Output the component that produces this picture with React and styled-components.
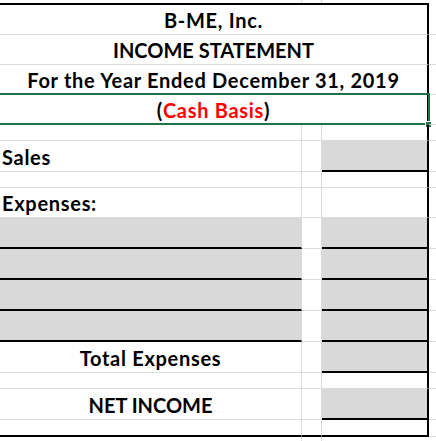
import styled, { createGlobalStyle } from "styled-components";

const GRID = "#dcdcdc";
const FILL = "#d9d9d9";
const INK = "#000";
const SELECT = "#217346";

const GlobalStyle = createGlobalStyle`
  html, body { margin: 0; padding: 0; background: #fff; }
  body { font-family: Lato, "Open Sans", sans-serif; }
`;

const Sheet = styled.div`
  width: 436px;
  height: 441px;
  overflow: hidden;
  background: #fff;
  display: flex;
  flex-direction: column;
`;

const Row = styled.div`
  flex: none;
  display: grid;
  grid-template-columns: 302px 20px 107px 1fr;
  height: ${(p) => p.$h}px;
`;

const Cell = styled.div`
  box-sizing: border-box;
  position: relative;
  grid-column: span ${(p) => p.$span || 1};
  min-width: 0;
  background: ${(p) => (p.$fill ? FILL : "transparent")};
  border-top: ${(p) => (p.$top ? `2px solid ${INK}` : "none")};
  border-right: ${(p) =>
    p.$edge
      ? `2px solid ${INK}`
      : p.$open
      ? "none"
      : `1px solid ${p.$fill ? FILL : GRID}`};
  border-bottom: ${(p) =>
    p.$rule ? `2px solid ${INK}` : p.$flat ? "none" : `1px solid ${GRID}`};
  display: flex;
  align-items: flex-end;
  justify-content: ${(p) => (p.$center ? "center" : "flex-start")};
  padding: 0 2px 4px;
  font-size: 20px;
  font-weight: 700;
  line-height: 20px;
  letter-spacing: ${(p) => (p.$track ? "0.7px" : "0")};
  color: ${INK};
  white-space: nowrap;
`;

const Red = styled.span`
  color: #ff0000;
`;

const Selection = styled.div`
  position: absolute;
  box-sizing: border-box;
  top: -2px;
  bottom: -1px;
  left: -2px;
  right: -3px;
  border: 2px solid ${SELECT};
  pointer-events: none;
`;

const Handle = styled.div`
  position: absolute;
  right: -3px;
  bottom: -4px;
  width: 5px;
  height: 5px;
  background: ${SELECT};
  box-shadow: 0 0 0 1px #fff;
`;

const TitleRow = ({ h, top, track, children, selected }) => (
  <Row $h={h}>
    <Cell $span={3} $edge $top={top} $track={track} $center>
      {children}
      {selected && (
        <Selection>
          <Handle />
        </Selection>
      )}
    </Cell>
    <Cell $open />
  </Row>
);

const LineRow = ({ h = 31, label, center, track, fillA, ruleA, fillC, ruleC, ruleB }) => (
  <Row $h={h}>
    <Cell $fill={fillA} $rule={ruleA} $center={center} $track={track}>
      {label}
    </Cell>
    <Cell $rule={ruleB} />
    <Cell $fill={fillC} $rule={ruleC} $edge />
    <Cell $open />
  </Row>
);

export default function App() {
  return (
    <>
      <GlobalStyle />
      <Sheet>
        <Row $h={3}>
          <Cell $flat />
          <Cell $flat />
          <Cell $flat $open />
          <Cell $flat $open />
        </Row>
        <TitleRow h={32} top track>
          B-ME, Inc.
        </TitleRow>
        <TitleRow h={30}>INCOME STATEMENT</TitleRow>
        <TitleRow h={30} track>
          For the Year Ended December 31, 2019
        </TitleRow>
        <TitleRow h={30} track selected>
          (<Red>Cash Basis</Red>)
        </TitleRow>
        <LineRow h={16} />
        <LineRow label="Sales" track fillC ruleC />
        <LineRow h={16} />
        <LineRow h={30} label="Expenses:" track />
        <LineRow fillA ruleA fillC ruleC />
        <LineRow fillA ruleA fillC ruleC />
        <LineRow fillA ruleA fillC ruleC />
        <LineRow fillA ruleA fillC ruleC />
        <LineRow label="Total Expenses" center track fillC ruleC />
        <LineRow h={16} />
        <LineRow label="NET INCOME" center fillC ruleC />
        <LineRow h={17} ruleA ruleB ruleC />
        <Row $h={4}>
          <Cell $flat />
          <Cell $flat />
          <Cell $flat $open />
          <Cell $flat $open />
        </Row>
      </Sheet>
    </>
  );
}
